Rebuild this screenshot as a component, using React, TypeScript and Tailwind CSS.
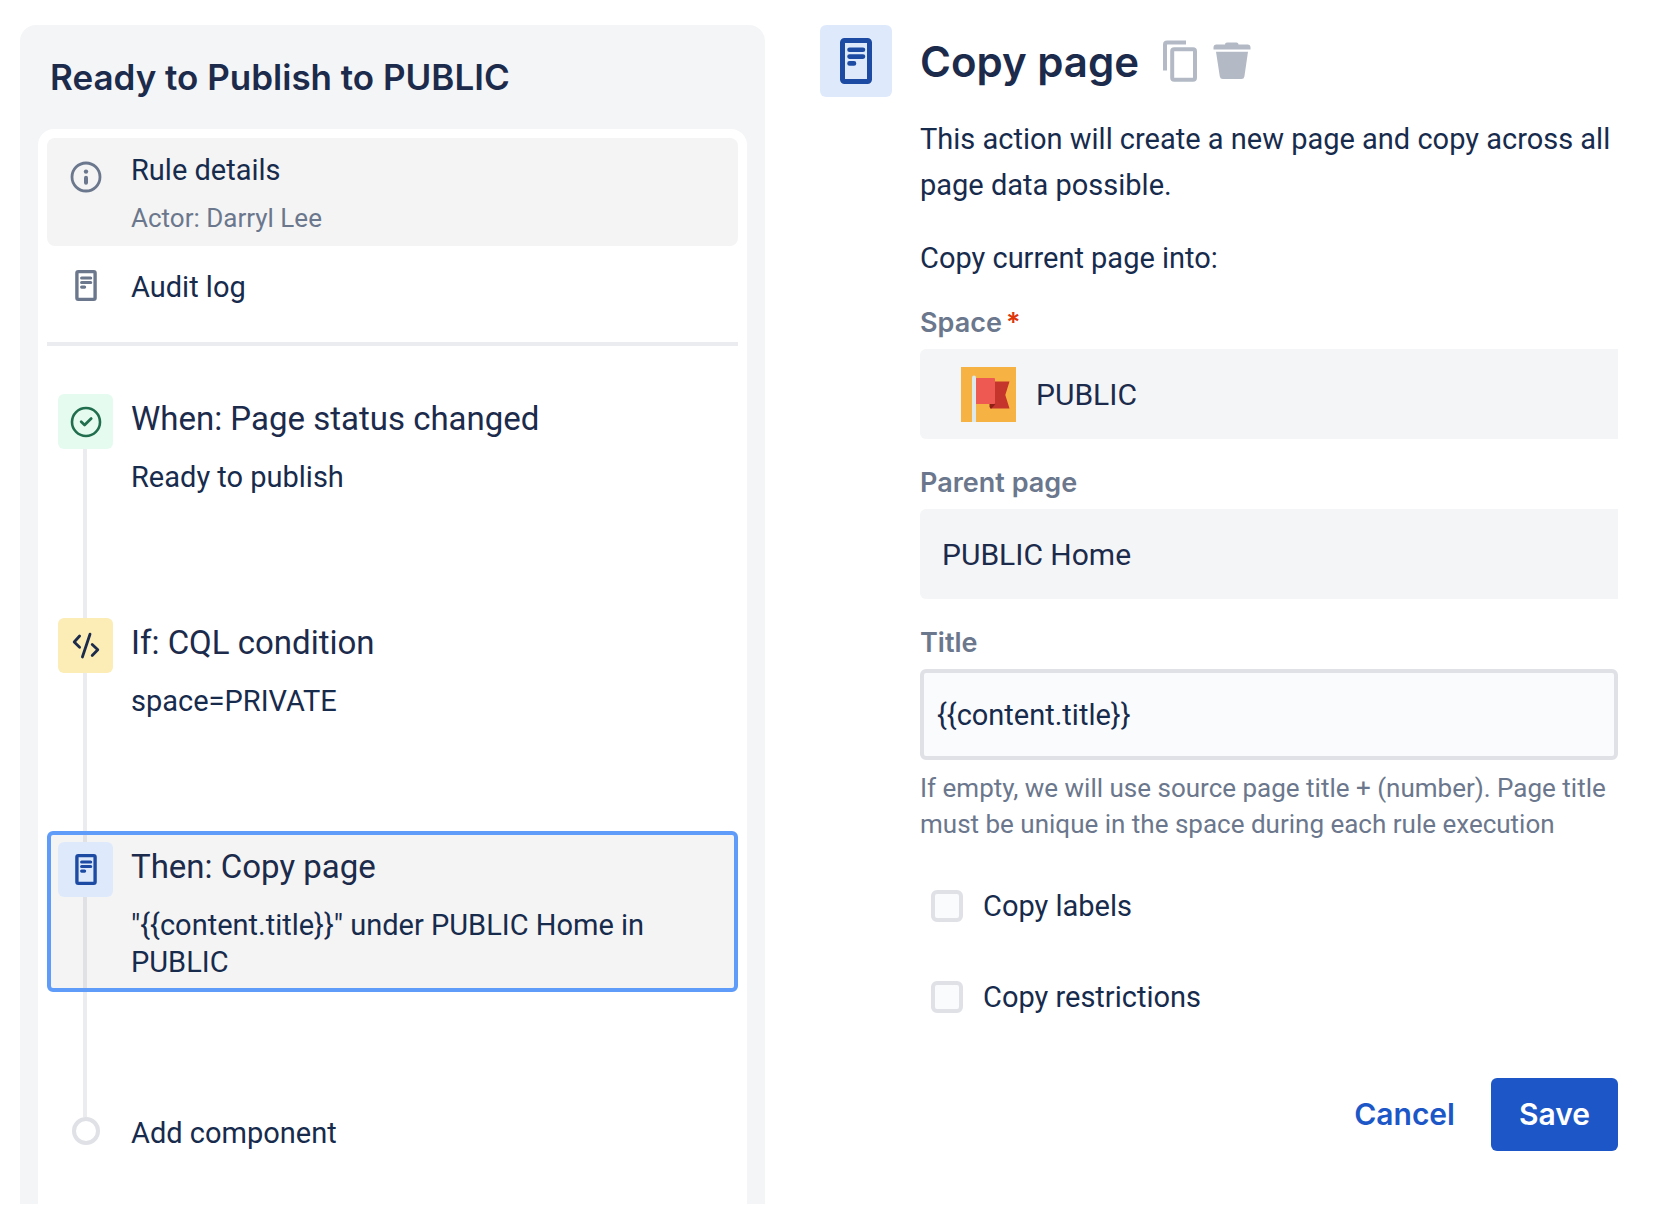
import React from 'react';

const DocIcon = ({ className }: { className: string }) => (
  <svg viewBox="0 0 32 46" className={className} fill="none" stroke="currentColor" aria-hidden="true">
    <rect x="2.5" y="2.5" width="27" height="41" rx="2" strokeWidth="5" />
    <path d="M9.5 11.8h13.5M9.5 18.6h13.5M9.5 25.4h4.5" strokeWidth="4.6" strokeLinecap="round" />
  </svg>
);

const InfoIcon = () => (
  <svg viewBox="0 0 32 32" className="h-8 w-8" fill="none" stroke="currentColor" aria-hidden="true">
    <circle cx="16" cy="16" r="14" strokeWidth="2.8" />
    <path d="M16 16.8v5" strokeWidth="4" strokeLinecap="round" />
    <circle cx="16" cy="10.6" r="2.2" fill="currentColor" stroke="none" />
  </svg>
);

const CheckIcon = () => (
  <svg viewBox="0 0 32 32" className="h-8 w-8" fill="none" stroke="currentColor" aria-hidden="true">
    <circle cx="16" cy="16" r="14" strokeWidth="2.6" />
    <path d="M11.2 15.8l3.4 3.2 6.6-6.4" strokeWidth="2.8" strokeLinecap="round" strokeLinejoin="round" />
  </svg>
);

const CodeIcon = () => (
  <svg viewBox="0 0 28 28" className="h-7 w-7" fill="none" stroke="currentColor" strokeWidth="2.8" strokeLinecap="round" strokeLinejoin="round" aria-hidden="true">
    <path d="M7.6 4L2.2 10l5.4 5.2M18 2.2L10.4 25M20.2 12.4l5.6 5.4-5.6 5.6" />
  </svg>
);

const CopyIcon = () => (
  <svg viewBox="0 0 34 42" className="h-[42px] w-[34px]" fill="none" stroke="currentColor" strokeWidth="4" aria-hidden="true">
    <path d="M23 2.5H4.2Q2 2.5 2 4.7V30.5" />
    <rect x="9.2" y="9.2" width="22.8" height="30.6" rx="2" />
  </svg>
);

const TrashIcon = () => (
  <svg viewBox="0 0 38 38" className="h-[38px] w-[38px]" fill="currentColor" aria-hidden="true">
    <path d="M12 2.6Q12 .6 14 .6h9.5q2 0 2 2h9q3 0 3 3v2H.5v-2q0-3 3-3z" />
    <path d="M3 9.8h32l-3.6 24.6q-.4 2.6-3 2.6H9.8q-2.6 0-3-2.6z" />
  </svg>
);

const FlagIcon = () => (
  <svg viewBox="0 0 55 55" className="h-[55px] w-[55px]" aria-hidden="true">
    <rect width="55" height="55" fill="#f6b344" />
    <path d="M34 14.5h14.5l-4.2 13.5 4.2 13.5H29V37z" fill="#c5352b" />
    <path d="M28.5 37h6l-4 4.5q-2 0-2-2z" fill="#8f2018" />
    <rect x="14.5" y="11" width="19.5" height="26" rx="1" fill="#ee5a52" />
    <path d="M11 55V10.5q0-2 2-2t2 2V55z" fill="#dde8ec" />
  </svg>
);

type Step = {
  title: string;
  detail: string;
  icon: React.ReactNode;
  iconClass: string;
  selected?: boolean;
};

const steps: Step[] = [
  {
    title: 'When: Page status changed',
    detail: 'Ready to publish',
    icon: <CheckIcon />,
    iconClass: 'bg-[#e5fbef] text-[#216e4e]',
  },
  {
    title: 'If: CQL condition',
    detail: 'space=PRIVATE',
    icon: <CodeIcon />,
    iconClass: 'bg-[#fbedb5] text-[#1c2b4b]',
  },
  {
    title: 'Then: Copy page',
    detail: '"{{content.title}}" under PUBLIC Home in PUBLIC',
    icon: <DocIcon className="h-[31px] w-[22px]" />,
    iconClass: 'bg-[#deeafc] text-[#1d4ba3]',
    selected: true,
  },
];

const StepItem = ({ step, first }: { step: Step; first: boolean }) => (
  <li className="relative pb-[100px]">
    {/* Connector line, the card's translucent background lies over it */}
    <span className={`absolute bottom-0 left-[36px] w-1 bg-[#ebecf0] ${first ? 'top-[65px]' : 'top-0'}`} />
    <button
      type="button"
      className={`relative flex w-full items-start gap-[18px] rounded-md border-4 p-[7px] text-left ${
        step.selected ? 'border-[#5f9bf8] bg-black/[0.043]' : 'border-transparent'
      }`}
    >
      <span className={`flex h-[55px] w-[55px] shrink-0 items-center justify-center rounded-md ${step.iconClass}`}>
        {step.icon}
      </span>
      <span className="min-w-0 flex-1 pt-[5px]">
        <span className="block text-[33px] leading-10 text-[#1c2b4b]">{step.title}</span>
        <span className="mt-5 block text-[29px] leading-[37px]">{step.detail}</span>
      </span>
    </button>
  </li>
);

const RulePanel = () => (
  <aside className="rounded-t-2xl bg-[#f4f5f7] px-[18px] pt-7">
    <h2 className="px-3 font-['Inter',sans-serif] text-[35px] font-semibold leading-[48px] text-[#1c2b4b]">
      Ready to Publish to PUBLIC
    </h2>
    <div className="mt-7 rounded-t-2xl bg-white px-[9px] pb-[55px] pt-[9px]">
      <button type="button" className="flex w-full items-start gap-[29px] rounded-lg bg-[#f4f4f4] px-[23px] pb-2 pt-3 text-left">
        <span className="mt-[11px] text-[#6b778c]">
          <InfoIcon />
        </span>
        <span>
          <span className="block text-[29px] leading-10">Rule details</span>
          <span className="mt-2 block text-[26px] leading-10 text-[#6b778c]">Actor: Darryl Lee</span>
        </span>
      </button>
      <button type="button" className="flex w-full items-start gap-[34px] px-7 py-5 text-left">
        <DocIcon className="mt-1 h-[31px] w-[22px] text-[#6b778c]" />
        <span className="text-[29px] leading-[42px]">Audit log</span>
      </button>
      <hr className="mt-[14px] border-t-4 border-[#ebecf0]" />
      <ol className="mt-[37px]">
        {steps.map((step, i) => (
          <StepItem key={step.title} step={step} first={i === 0} />
        ))}
        <li className="relative pt-[25px]">
          <span className="absolute left-[36px] top-0 h-[25px] w-1 bg-[#ebecf0]" />
          <button type="button" className="flex items-start gap-[31px] pl-[25px] text-left">
            <span className="h-7 w-7 rounded-full border-4 border-[#dfe1e6]" />
            <span className="text-[29px] leading-8">Add component</span>
          </button>
        </li>
      </ol>
    </div>
  </aside>
);

const labelClass = "block font-['Inter',sans-serif] text-[27px] font-semibold leading-9 text-[#6b778c]";

const CopyPageForm = () => {
  const [title, setTitle] = React.useState('{{content.title}}');

  return (
    <form className="flex items-start gap-7" onSubmit={(e) => e.preventDefault()}>
      <span className="flex h-[72px] w-[72px] shrink-0 items-center justify-center rounded-md bg-[#deeafc] text-[#1d4ba3]">
        <DocIcon className="h-[46px] w-8" />
      </span>
      <div className="min-w-0 flex-1">
        <div className="flex h-[72px] items-center text-[#b3bac5]">
          <h1 className="mr-6 font-['Inter',sans-serif] text-[42px] font-semibold text-[#1c2b4b]">Copy page</h1>
          <button type="button" aria-label="Duplicate component">
            <CopyIcon />
          </button>
          <button type="button" aria-label="Delete component" className="ml-4">
            <TrashIcon />
          </button>
        </div>
        <p className="mt-[19px] text-[29px] leading-[46px]">
          This action will create a new page and copy across all page data possible.
        </p>
        <p className="mt-[27px] text-[29px] leading-[46px]">Copy current page into:</p>

        <label htmlFor="space" className={`mt-6 ${labelClass}`}>
          Space<span className="pl-1 text-[#de350b]">*</span>
        </label>
        <div className="mt-2 flex h-[90px] items-center gap-5 rounded-l-md bg-[#f4f5f7] pl-[41px]">
          <FlagIcon />
          <select id="space" className="min-w-0 flex-1 appearance-none bg-transparent text-[30px] text-[#1c2b4b] outline-none">
            <option>PUBLIC</option>
          </select>
        </div>

        <label htmlFor="parent" className={`mt-[26px] ${labelClass}`}>
          Parent page
        </label>
        <select
          id="parent"
          className="mt-2 block h-[90px] w-full appearance-none rounded-l-md bg-[#f4f5f7] pl-[22px] text-[30px] text-[#1c2b4b] outline-none"
        >
          <option>PUBLIC Home</option>
        </select>

        <label htmlFor="title" className={`mt-[26px] ${labelClass}`}>
          Title
        </label>
        <input
          id="title"
          type="text"
          value={title}
          onChange={(e) => setTitle(e.target.value)}
          className="mt-2 block h-[91px] w-full rounded-md border-4 border-[#dfe1e6] bg-[#fafbfc] px-[13px] text-[29px] outline-none"
        />
        <p className="mt-[10px] text-[26px] leading-9 text-[#6b778c]">
          If empty, we will use source page title + (number). Page title must be unique in the space during each rule execution
        </p>

        <div className="mt-11 flex flex-col gap-[51px] pl-[11px]">
          {['Copy labels', 'Copy restrictions'].map((label) => (
            <label key={label} className="flex items-center gap-5 text-[29px] leading-10">
              <input type="checkbox" className="h-8 w-8 appearance-none rounded-md border-4 border-[#dfe1e6] bg-[#fafbfc] checked:bg-[#1d57c7]" />
              {label}
            </label>
          ))}
        </div>

        <div className="mt-[61px] flex items-center justify-end gap-9 font-['Inter',sans-serif] text-[30px]">
          <button type="button" className="font-semibold text-[#1d57c7]">
            Cancel
          </button>
          <button type="submit" className="h-[73px] rounded-md bg-[#1d57c7] px-7 font-semibold text-white">
            Save
          </button>
        </div>
      </div>
    </form>
  );
};

const App = () => (
  <main className="grid grid-cols-[745fr_798fr] gap-[55px] bg-white pb-3 pl-5 pr-[50px] pt-[25px] font-['Roboto',sans-serif] text-[#172b4d]">
    <RulePanel />
    <CopyPageForm />
  </main>
);

export default App;
